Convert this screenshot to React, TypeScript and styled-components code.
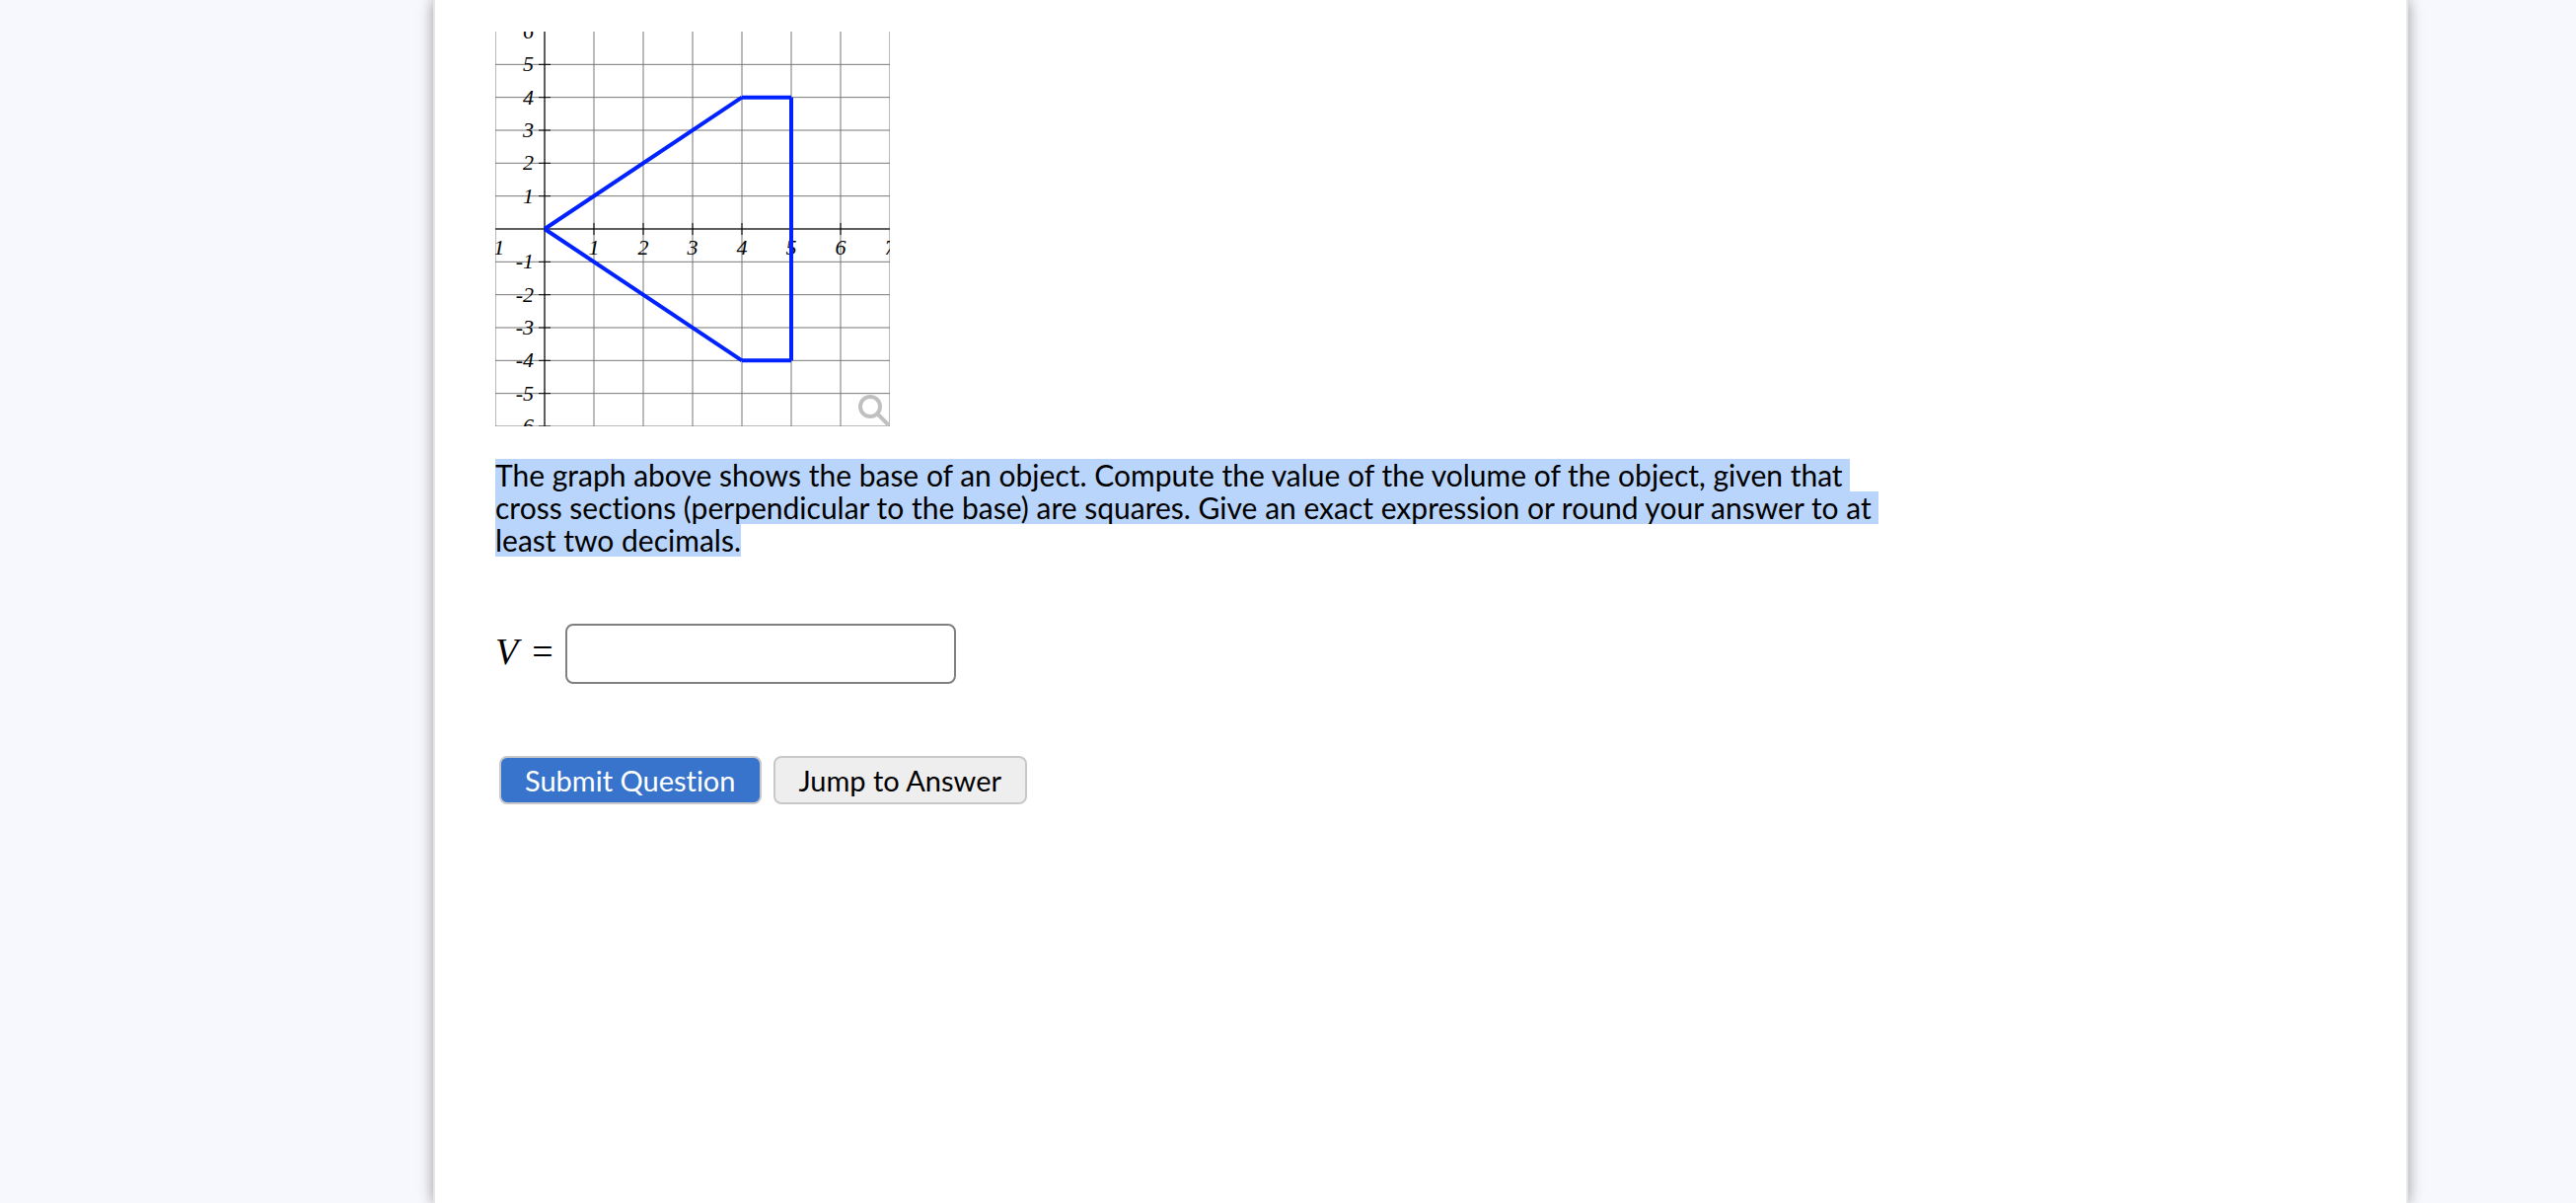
import React from "react";
import styled, { createGlobalStyle } from "styled-components";

const GlobalStyle = createGlobalStyle`
  * { box-sizing: border-box; }
  body {
    margin: 0;
    background: #f6f8fd;
    color: #000;
    font-family: Lato, "Open Sans", sans-serif;
    font-size: 30px;
    font-variant-ligatures: none;
    line-height: 33px;
  }
`;

const Page = styled.div`
  display: flex;
  min-height: 100vh;
  padding: 0 170px 0 439px;
`;

const Sheet = styled.main`
  flex: 1;
  min-width: 0;
  padding: 32px 61px;
  background: #fff;
  border: solid #e6e6e4;
  border-width: 0 2px;
  box-shadow: 0 0 14px rgba(0, 0, 0, 0.38);
`;

const Question = styled.form`
  display: flex;
  flex-direction: column;
  align-items: flex-start;
`;

const Graph = styled.svg`
  display: block;
  width: 400px;
  height: 400px;
  overflow: hidden;
`;

const GraphLabel = styled.text`
  font: italic 22px "Liberation Serif", serif;
`;

const Prompt = styled.p`
  margin: 33px 0 0;
`;

const Line = styled.span`
  display: block;
  width: fit-content;
  background: #b9d5fb;
  white-space: pre;
`;

const AnswerRow = styled.div`
  display: flex;
  align-items: center;
  gap: 12px;
  margin-top: 68px;
`;

const AnswerLabel = styled.label`
  display: flex;
  gap: 14px;
  padding-bottom: 4px;
  font-family: "Liberation Serif", serif;
  font-size: 38px;
`;

const AnswerInput = styled.input`
  width: 396px;
  height: 61px;
  padding: 8px 12px;
  border: 2px solid #808080;
  border-radius: 8px;
  background: #fff;
  font: inherit;
`;

const Actions = styled.div`
  display: flex;
  gap: 12px;
  margin: 73px 0 0 4px;
`;

const Button = styled.button<{ $primary?: boolean }>`
  height: 49px;
  padding: 0 24px;
  border: 2px solid #c8c8c8;
  border-radius: 8px;
  background: ${(p) => (p.$primary ? "#3874cb" : "#eee")};
  color: ${(p) => (p.$primary ? "#fff" : "#000")};
  font: inherit;
  font-size: 29px;
  font-variant-ligatures: none;
  white-space: nowrap;
  cursor: pointer;
`;

const px = (x: number) => 50 + x * 50;
const py = (y: number) => 200 - (y * 100) / 3;

const columns = [-1, 0, 1, 2, 3, 4, 5, 6, 7];
const rows = [5, 4, 3, 2, 1, 0, -1, -2, -3, -4, -5, -6];
const shape = [[0, 0], [4, 4], [5, 4], [5, -4], [4, -4], [0, 0]];

function BaseGraph() {
  return (
    <Graph viewBox="0 0 400 400" role="img" aria-label="Base of the object">
      <g stroke="#777">
        {columns.map((x) => <line key={x} x1={px(x)} x2={px(x)} y1={0} y2={400} />)}
        {rows.map((y) => <line key={y} x1={0} x2={400} y1={py(y)} y2={py(y)} />)}
      </g>
      <g stroke="#000">
        <line x1={50} x2={50} y1={0} y2={400} />
        <line x1={0} x2={400} y1={200} y2={200} />
        {columns.filter((x) => x > 0 && x < 7).map((x) => (
          <line key={x} x1={px(x)} x2={px(x)} y1={194} y2={206} />
        ))}
        {rows.filter((y) => y !== 0).map((y) => (
          <line key={y} x1={44} x2={56} y1={py(y)} y2={py(y)} />
        ))}
      </g>
      {columns.filter((x) => x !== 0).map((x) => (
        <GraphLabel key={x} x={px(x)} y={226} textAnchor="middle">{x}</GraphLabel>
      ))}
      {[6, ...rows].filter((y) => y !== 0).map((y) => (
        <GraphLabel key={y} x={39} y={py(y) + 7} textAnchor="end">{y}</GraphLabel>
      ))}
      <g stroke="#0022ff" strokeWidth={4}>
        {shape.slice(1).map(([x, y], i) => (
          <line key={i} x1={px(shape[i][0])} y1={py(shape[i][1])} x2={px(x)} y2={py(y)} />
        ))}
      </g>
      <g stroke="#c0c0c0" strokeWidth={4} fill="none">
        <circle cx={380} cy={380} r={10} />
        <path d="M387 387L399 399" />
      </g>
    </Graph>
  );
}

export default function App() {
  return (
    <>
      <GlobalStyle />
      <Page>
        <Sheet>
          <Question onSubmit={(e) => e.preventDefault()}>
            <BaseGraph />
            <Prompt>
              <Line>{"The graph above shows the base of an object. Compute the value of the volume of the object, given that "}</Line>
              <Line>{"cross sections (perpendicular to the base) are squares. Give an exact expression or round your answer to at "}</Line>
              <Line>{"least two decimals."}</Line>
            </Prompt>
            <AnswerRow>
              <AnswerLabel htmlFor="volume"><i>V</i><span>=</span></AnswerLabel>
              <AnswerInput id="volume" type="text" autoComplete="off" />
            </AnswerRow>
            <Actions>
              <Button type="submit" $primary>Submit Question</Button>
              <Button type="button">Jump to Answer</Button>
            </Actions>
          </Question>
        </Sheet>
      </Page>
    </>
  );
}
